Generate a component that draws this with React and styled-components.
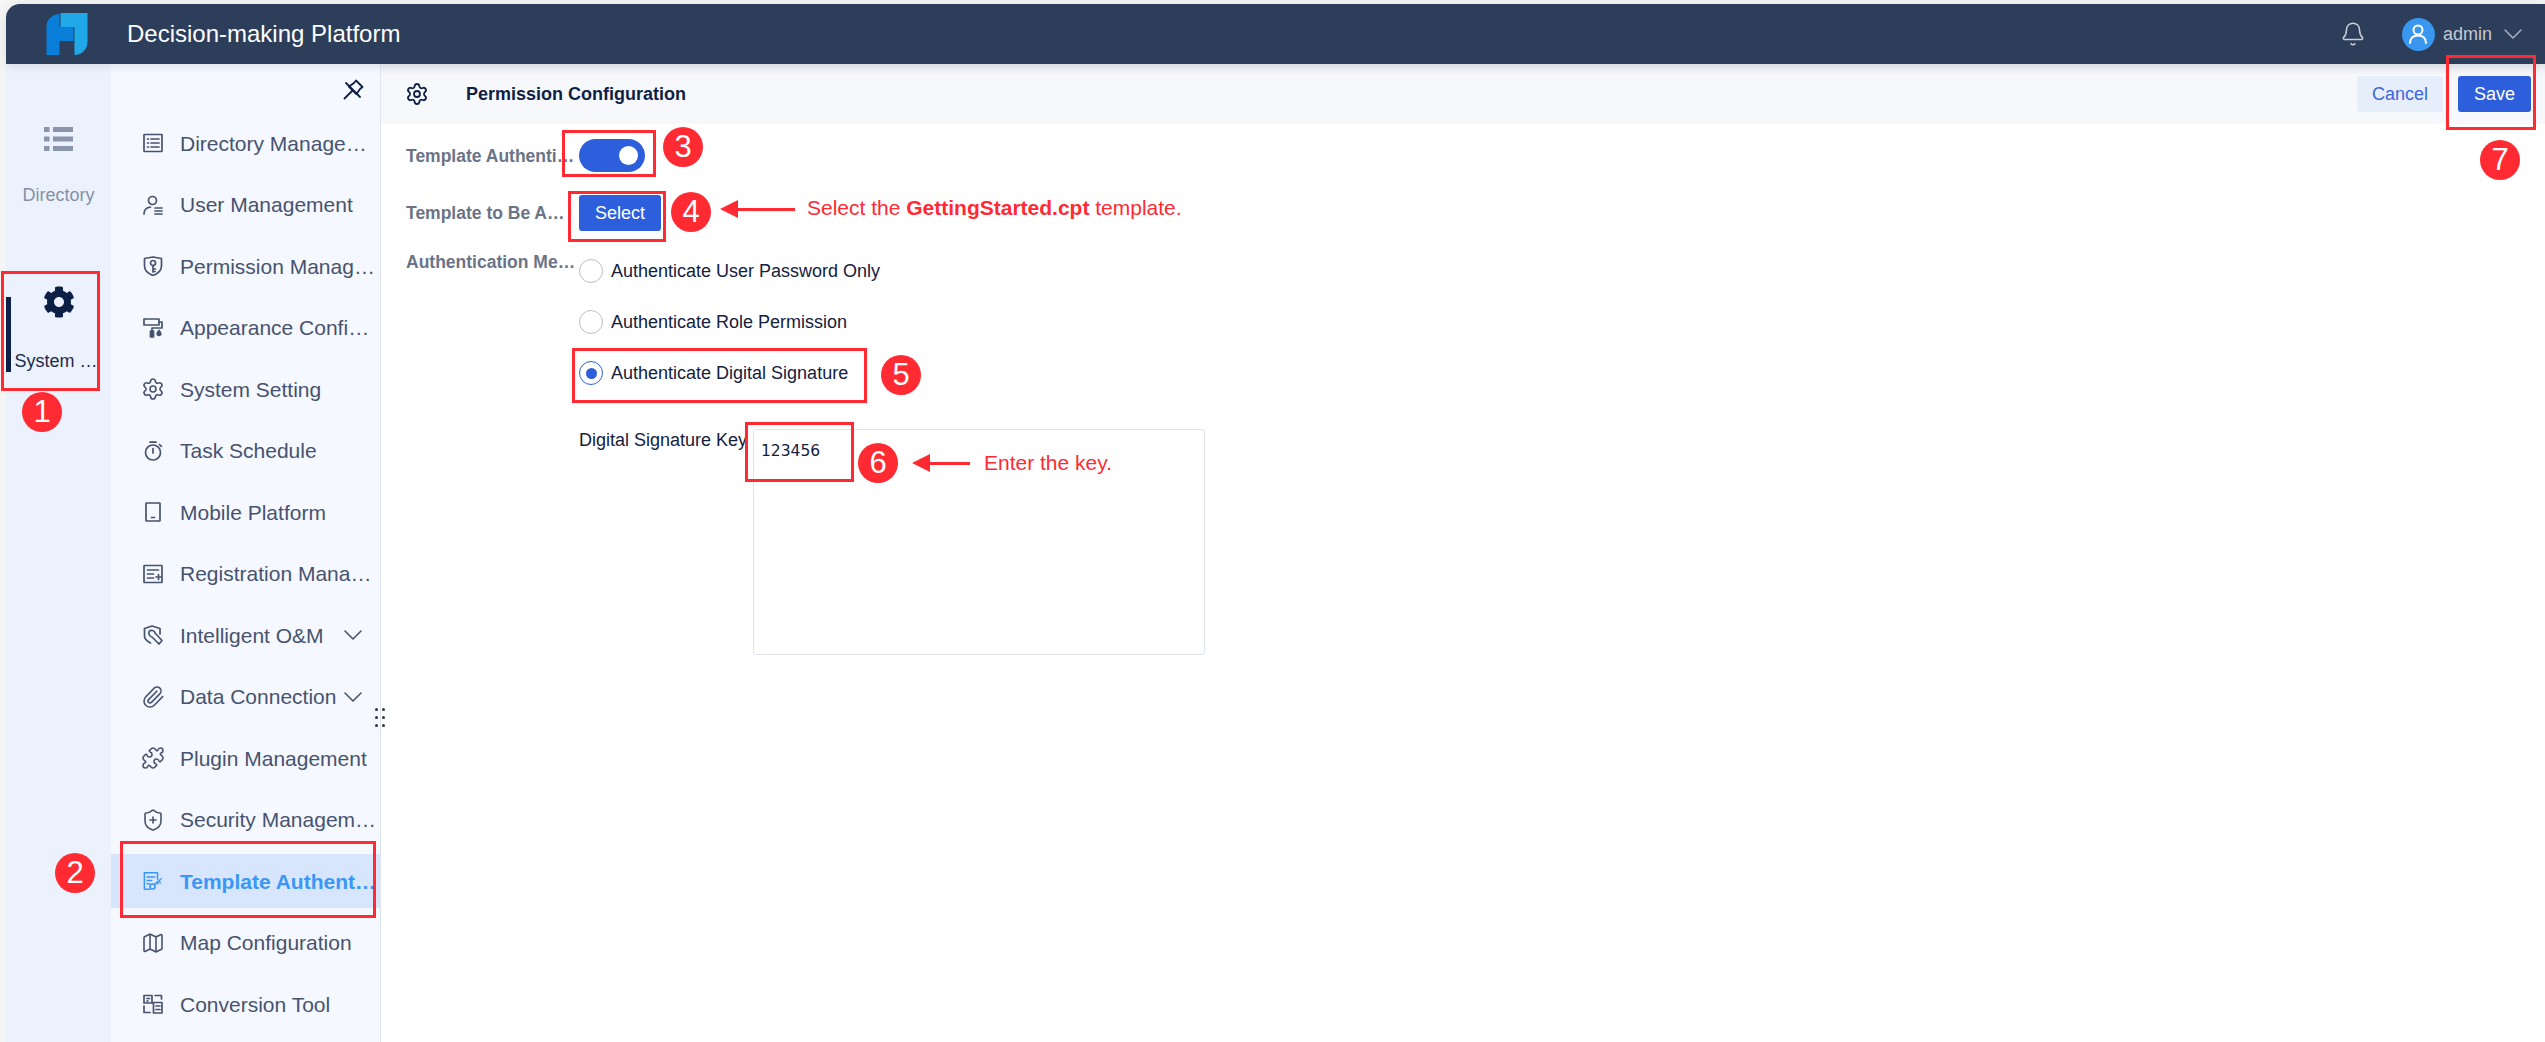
import styled, { createGlobalStyle } from 'styled-components';
import { Bell, ChevronDown, Map as MapIcon, Paperclip, Puzzle, Settings, ShieldPlus } from 'lucide-react';
import { FaCog } from 'react-icons/fa';

const GlobalStyle = createGlobalStyle`
  html, body {
    margin: 0;
    height: 100%;
    overflow: hidden;
    background: #f5f5f5;
    font-family: "Liberation Sans", Arial, sans-serif;
  }
  * { box-sizing: border-box; }
`;

const Page = styled.div`
  position: relative;
  width: 2545px;
  height: 1042px;
  padding: 4px 0 0 6px;
  display: flex;
  flex-direction: column;
  overflow: hidden;
`;
const Header = styled.header`
  position: relative;
  z-index: 2;
  flex: 0 0 60px;
  display: flex;
  align-items: center;
  padding: 0 16px 0 40px;
  background: #2c3e5a;
  border-top-left-radius: 14px;
  box-shadow: 0 2px 10px rgba(30, 40, 60, 0.12);
`;
const Logo = styled.svg`
  width: 42px;
  height: 42px;
  margin-right: 39px;
`;
const HeaderTitle = styled.div`
  flex: 1;
  font-size: 24px;
  color: #fff;
`;
const BellWrap = styled.div`
  display: flex;
  margin-right: 36px;
  color: #c9ced7;
`;
const Avatar = styled.div`
  width: 33px;
  height: 33px;
  border-radius: 50%;
  background: #3a97f0;
  display: flex;
  align-items: center;
  justify-content: center;
  margin-right: 8px;
`;
const UserName = styled.span`
  font-size: 18px;
  color: #c4cad4;
  margin-right: 5px;
`;
const Body = styled.div`
  flex: 1;
  display: flex;
  min-height: 0;
`;
const Rail = styled.nav`
  flex: 0 0 105px;
  background: #ecf2fd;
`;
const RailItem = styled.div`
  position: relative;
  height: 166px;
  padding-top: ${p => p.$top}px;
  display: flex;
  flex-direction: column;
  align-items: center;
  color: ${p => (p.$active ? '#0c1f45' : '#8a95ac')};

  ${p => p.$active && `
    &::before {
      content: '';
      position: absolute;
      left: 0;
      top: 67px;
      width: 5px;
      height: 75px;
      background: #0c1f45;
    }
  `}
`;
const RailIcon = styled.div`
  height: 33px;
  display: flex;
  align-items: center;
`;
const RailLabel = styled.div`
  margin-top: ${p => p.$gap}px;
  margin-left: ${p => (p.$active ? -5 : 0)}px;
  font-size: 18px;
  line-height: 22px;
  color: ${p => (p.$active ? '#1a2a4a' : '#8590a8')};
`;
const SubNav = styled.aside`
  position: relative;
  flex: 0 0 270px;
  min-width: 0;
  background: #f5f8ff;
  border-right: 1px solid #dfe3ee;
`;
const PinRow = styled.div`
  height: 52px;
  padding: 14px 15px 0 0;
  display: flex;
  justify-content: flex-end;
  align-items: flex-start;
`;
const MenuList = styled.ul`
  list-style: none;
  margin: 0;
  padding: 0;
  display: flex;
  flex-direction: column;
  gap: 7.5px;
`;
const MenuRow = styled.li`
  height: 54px;
  padding: 0 3px 0 32px;
  display: flex;
  align-items: center;
  gap: 17px;
  color: ${p => (p.$active ? '#3a97f5' : '#47536e')};
  background: ${p => (p.$active ? '#d7e6fc' : 'transparent')};
  font-size: 21px;
  font-weight: ${p => (p.$active ? 700 : 400)};
`;
const MenuIcon = styled.svg`
  flex: 0 0 20px;
  width: 20px;
  height: 20px;
  fill: none;
  stroke: currentColor;
  stroke-width: 1.7;
  stroke-linecap: round;
  stroke-linejoin: round;
`;
const MenuText = styled.span`
  flex: 1;
  min-width: 0;
  padding-top: 1px;
  white-space: nowrap;
  overflow: hidden;
  text-overflow: ellipsis;
`;
const MenuChevron = styled(ChevronDown)`
  position: absolute;
  left: 226px;
`;
const Handle = styled.div`
  position: absolute;
  left: 264px;
  top: 644px;
  display: grid;
  grid-template-columns: 3px 3px;
  column-gap: 4px;
  row-gap: 5px;

  & > i {
    width: 3px;
    height: 3px;
    background: #2a3347;
    border-radius: 50%;
  }
`;
const Main = styled.main`
  flex: 1;
  min-width: 0;
  display: flex;
  flex-direction: column;
  background: #fff;
`;
const TopBar = styled.div`
  flex: 0 0 60px;
  padding: 0 14px 0 24px;
  display: flex;
  align-items: center;
  background: linear-gradient(#eceef1, #f7f8fc 12px);
`;
const TopBarIcon = styled(Settings)`
  color: #0f1f44;
  margin-right: 37px;
`;
const PageTitle = styled.h1`
  flex: 1;
  margin: 0;
  font-size: 18px;
  font-weight: 700;
  color: #0f1f44;
`;
const Button = styled.button`
  height: 36px;
  width: ${p => p.$width}px;
  margin-left: ${p => p.$left || 0}px;
  border: 0;
  border-radius: 3px;
  padding: 0;
  font: 400 18px "Liberation Sans", Arial, sans-serif;
  color: ${p => (p.$ghost ? '#3e66dc' : '#fff')};
  background: ${p => (p.$ghost ? '#e6eefc' : '#2d5fdc')};
`;
const Form = styled.div`
  padding: 15px 0 0 25px;
  display: flex;
  flex-direction: column;
`;
const FormRow = styled.div`
  display: flex;
  align-items: ${p => (p.$top ? 'flex-start' : 'center')};
  margin-bottom: ${p => p.$bottom}px;
`;
const LabelSlot = styled.div`
  flex: 0 0 173px;
  min-width: 0;
`;
const FieldLabel = styled.label`
  display: block;
  max-width: ${p => p.$max || 173}px;
  font-size: 17.5px;
  line-height: ${p => (p.$tall ? '33px' : '22px')};
  font-weight: 700;
  color: #6b7387;
  white-space: nowrap;
  overflow: hidden;
  text-overflow: ellipsis;
`;
const Toggle = styled.div`
  width: 66px;
  height: 33px;
  border-radius: 17px;
  background: #2d5fdc;
  display: flex;
  align-items: center;
  justify-content: flex-end;
  padding-right: 7px;

  &::after {
    content: '';
    width: 19px;
    height: 19px;
    border-radius: 50%;
    background: #fff;
  }
`;
const RadioGroup = styled.div`
  display: flex;
  flex-direction: column;
`;
const RadioRow = styled.div`
  height: 51px;
  display: flex;
  align-items: center;
  gap: 8px;
  font-size: 18px;
  color: #14213d;
`;
const RadioDot = styled.span`
  width: 24px;
  height: 24px;
  border-radius: 50%;
  border: 1px solid ${p => (p.$checked ? '#2d5fdc' : '#b9bfcc')};
  background: #fff;
  display: flex;
  align-items: center;
  justify-content: center;

  ${p => p.$checked && `
    &::after {
      content: '';
      width: 11px;
      height: 11px;
      border-radius: 50%;
      background: #2d5fdc;
    }
  `}
`;
const KeyRow = styled.div`
  display: flex;
  align-items: flex-start;
  margin: 30.5px 0 0 173px;
`;
const KeyLabel = styled.label`
  flex: 0 0 174px;
  font-size: 18px;
  line-height: 22px;
  color: #14213d;
`;
const KeyBox = styled.div`
  width: 452px;
  height: 226px;
  padding: 10px 7px;
  border: 1px solid #dfe2ea;
  border-radius: 3px;
  font-family: "DejaVu Sans", Verdana, sans-serif;
  font-size: 15.5px;
  line-height: 22px;
  color: #14213d;
`;

const RedBox = styled.div`
  position: absolute;
  left: ${p => p.$x}px;
  top: ${p => p.$y}px;
  width: ${p => p.$w}px;
  height: ${p => p.$h}px;
  border: 3px solid #ff2a32;
  z-index: 5;
`;
const Badge = styled.div`
  position: absolute;
  left: ${p => p.$x - 20}px;
  top: ${p => p.$y - 20}px;
  width: 40px;
  height: 40px;
  border-radius: 50%;
  background: #ff2a32;
  color: #fff;
  font-size: 31px;
  line-height: 40px;
  text-align: center;
  z-index: 5;
`;
const Arrow = styled.div`
  position: absolute;
  left: ${p => p.$x}px;
  top: ${p => p.$y - 9}px;
  width: ${p => p.$w}px;
  height: 18px;
  display: flex;
  align-items: center;
  z-index: 5;

  &::before {
    content: '';
    border-style: solid;
    border-width: 9px 18px 9px 0;
    border-color: transparent #ff2a32 transparent transparent;
  }
  &::after {
    content: '';
    flex: 1;
    height: 3px;
    background: #ff2a32;
  }
`;
const Note = styled.div`
  position: absolute;
  left: ${p => p.$x}px;
  top: ${p => p.$y - 12}px;
  font-size: 21px;
  line-height: 24px;
  color: #ff2a32;
  white-space: nowrap;
  z-index: 5;
`;

const DirectoryIcon = () => (
  <MenuIcon viewBox="0 0 20 20">
    <rect x="1" y="1.500" width="18" height="17" rx="0.5" />
    <path d="M4.500 6h1M8 6h8M4.500 10h1M8 10h8M4.500 14h1M8 14h8" />
  </MenuIcon>
);
const UserIcon = () => (
  <MenuIcon viewBox="0 0 20 20">
    <circle cx="9.500" cy="5.500" r="4" />
    <path d="M1 19c0-4 2.500-6.500 6.500-7M12 13h7M12 16h7M12 19h7" />
  </MenuIcon>
);
const PermissionIcon = () => (
  <MenuIcon viewBox="0 0 20 20">
    <path d="M10 1 18.500 2.500V10c0 4.500-3.500 7.500-8.500 9.500C5 17.500 1.500 14.500 1.500 10V2.500z" />
    <circle cx="10" cy="7" r="2.500" />
    <path d="M10 9.500V16M10 13h2.500M10 15.500h2" />
  </MenuIcon>
);
const RollerIcon = () => (
  <MenuIcon viewBox="0 0 20 20">
    <rect x="1" y="1" width="15" height="6" />
    <path d="M16 4h3v6H9v3" />
    <rect x="7.500" y="13" width="3" height="6" fill="currentColor" />
    <path d="M16 12.500c1 1.200 1.800 2 1.800 3a1.800 1.800 0 0 1-3.600 0c0-1 .8-1.800 1.800-3z" fill="currentColor" />
  </MenuIcon>
);
const TimerIcon = () => (
  <MenuIcon viewBox="0 0 20 20">
    <circle cx="10" cy="11.500" r="7.500" />
    <path d="M7 1.200h6M10 7.500v4.500M16.500 3.500l1.800 1.800" />
  </MenuIcon>
);
const MobileIcon = () => (
  <MenuIcon viewBox="0 0 20 20">
    <rect x="3" y="1" width="14" height="18" rx="0.5" />
    <path d="M8.500 15.500h3" />
  </MenuIcon>
);
const RegistrationIcon = () => (
  <MenuIcon viewBox="0 0 20 20">
    <rect x="1" y="1.500" width="18" height="17" rx="0.5" />
    <path d="M4.500 6h11M4.500 10h6M4.500 14h6M13 13h5M15.500 10.500v5" />
  </MenuIcon>
);
const OpsIcon = () => (
  <MenuIcon viewBox="0 0 20 20">
    <path d="M17 9V3.500L9 1 1.500 3.500V11c0 3 3 5.500 6 7" />
    <path d="M6.500 6c2-1.500 5-.5 5.500 2l7 7.500-3 3.500-7-7c-2.500-.5-4-3.500-2.500-6z" />
  </MenuIcon>
);
const TemplateIcon = () => (
  <MenuIcon viewBox="0 0 22 20">
    <path d="M8 19H1.500V1H16v7" />
    <path d="M4.500 5.500h8.500M4.500 9.500h5M4.500 13h2.500" />
    <circle cx="10.500" cy="16" r="2.800" />
    <path d="m12.500 14 7.500-6.500M17 10l2 2M15 11.500l1.500 1.500" />
  </MenuIcon>
);
const ConvertIcon = () => (
  <MenuIcon viewBox="0 0 20 20">
    <path d="M1 9V1.500h8V9zM4 4.500h2.500M4 7h1M12 1.500h6.500V5M1 12v6.500h6M10.500 8.500h8.500v10.500H10.500zM13 12h4M13 15.500h4" />
  </MenuIcon>
);
const PackedIcon = styled.span`
  flex: 0 0 20px;
  display: flex;
  justify-content: center;
  width: 20px;
`;
const packed = Comp => <PackedIcon><Comp size={24} strokeWidth={1.6} style={{ flex: '0 0 24px' }} /></PackedIcon>;

const MENU = [
  { label: 'Directory Management', icon: <DirectoryIcon /> },
  { label: 'User Management', icon: <UserIcon /> },
  { label: 'Permission Management', icon: <PermissionIcon /> },
  { label: 'Appearance Configuration', icon: <RollerIcon /> },
  { label: 'System Setting', icon: packed(Settings) },
  { label: 'Task Schedule', icon: <TimerIcon /> },
  { label: 'Mobile Platform', icon: <MobileIcon /> },
  { label: 'Registration Management', icon: <RegistrationIcon /> },
  { label: 'Intelligent O&M', icon: <OpsIcon />, more: true },
  { label: 'Data Connection', icon: packed(Paperclip), more: true },
  { label: 'Plugin Management', icon: packed(Puzzle) },
  { label: 'Security Management', icon: packed(ShieldPlus) },
  { label: 'Template Authentication', icon: <TemplateIcon />, active: true },
  { label: 'Map Configuration', icon: packed(MapIcon) },
  { label: 'Conversion Tool', icon: <ConvertIcon /> },
];

const BOXES = [
  [1, 271, 99, 120],
  [120, 841, 256, 77],
  [562, 130, 94, 47],
  [568, 191, 98, 51],
  [572, 348, 295, 55],
  [745, 422, 109, 60],
  [2446, 55, 90, 75],
];
const BADGES = [
  [42, 412],
  [75, 873],
  [683, 147],
  [691, 212],
  [901, 375],
  [878, 463],
  [2500, 160],
];

export default function App() {
  return (
    <Page>
      <GlobalStyle />
      <Header>
        <Logo viewBox="0 0 41 42">
          <path fill="#0a7fd9" d="M0 14a13 13 0 0 1 13-13v13h14v14H13v14H0z" />
          <path fill="#1fa9e8" d="M14 0h27v29a13 13 0 0 1-13 13V14H14z" />
        </Logo>
        <HeaderTitle>Decision-making Platform</HeaderTitle>
        <BellWrap>
          <Bell size={26} strokeWidth={1.4} />
        </BellWrap>
        <Avatar>
          <svg width="24" height="24" viewBox="0 0 24 24" fill="none" stroke="#fff" strokeWidth="2" strokeLinecap="round">
            <circle cx="12" cy="8" r="4.500" />
            <path d="M4 21c0-5 3.500-7.500 8-7.500s8 2.500 8 7.500" />
          </svg>
        </Avatar>
        <UserName>admin</UserName>
        <ChevronDown size={32} color="#aab2bf" strokeWidth={1.1} />
      </Header>
      <Body>
        <Rail>
          <RailItem $top={58}>
            <RailIcon>
              <svg width="29" height="26" viewBox="0 0 29 26" fill="currentColor">
                <rect x="0" y="1" width="5.500" height="5" />
                <rect x="9" y="1" width="20" height="5" />
                <rect x="0" y="10.500" width="5.500" height="5" />
                <rect x="9" y="10.500" width="20" height="5" />
                <rect x="0" y="20" width="5.500" height="5" />
                <rect x="9" y="20" width="20" height="5" />
              </svg>
            </RailIcon>
            <RailLabel $gap={29}>Directory</RailLabel>
          </RailItem>
          <RailItem $active $top={55}>
            <RailIcon><FaCog size={32} /></RailIcon>
            <RailLabel $active $gap={32}>System …</RailLabel>
          </RailItem>
        </Rail>
        <SubNav>
          <PinRow>
            <svg width="24" height="24" viewBox="0 0 24 24" fill="none" stroke="#0f1f44" strokeWidth="1.800" strokeLinecap="round" strokeLinejoin="round">
              <path d="M15 2.500 21.500 9 19 11l-3.500 5-7.500-7.500 5-3.500z" />
              <path d="M8 8.500l7.500 7.500M11.500 12.500 3.500 20.500M5 5l14 14" />
            </svg>
          </PinRow>
          <MenuList>
            {MENU.map(item => (
              <MenuRow key={item.label} $active={item.active}>
                {item.icon}
                <MenuText>{item.label}</MenuText>
                {item.more && <MenuChevron size={32} strokeWidth={1.2} />}
              </MenuRow>
            ))}
          </MenuList>
          <Handle>
            {[0, 1, 2, 3, 4, 5].map(i => <i key={i} />)}
          </Handle>
        </SubNav>
        <Main>
          <TopBar>
            <TopBarIcon size={24} strokeWidth={1.8} />
            <PageTitle>Permission Configuration</PageTitle>
            <Button $ghost $width={86}>Cancel</Button>
            <Button $width={73} $left={15}>Save</Button>
          </TopBar>
          <Form>
            <FormRow $bottom={23}>
              <LabelSlot><FieldLabel>Template Authentication</FieldLabel></LabelSlot>
              <Toggle />
            </FormRow>
            <FormRow $bottom={14.5}>
              <LabelSlot><FieldLabel $max={163}>Template to Be Authenticated</FieldLabel></LabelSlot>
              <Button $width={82}>Select</Button>
            </FormRow>
            <FormRow $top $bottom={0}>
              <LabelSlot><FieldLabel $tall>Authentication Method</FieldLabel></LabelSlot>
              <RadioGroup>
                <RadioRow><RadioDot />Authenticate User Password Only</RadioRow>
                <RadioRow><RadioDot />Authenticate Role Permission</RadioRow>
                <RadioRow><RadioDot $checked />Authenticate Digital Signature</RadioRow>
              </RadioGroup>
            </FormRow>
            <KeyRow>
              <KeyLabel>Digital Signature Key</KeyLabel>
              <KeyBox>123456</KeyBox>
            </KeyRow>
          </Form>
        </Main>
      </Body>
      {BOXES.map(([x, y, w, h]) => <RedBox key={`${x}-${y}`} $x={x} $y={y} $w={w} $h={h} />)}
      {BADGES.map(([x, y], i) => <Badge key={i} $x={x} $y={y}>{i + 1}</Badge>)}
      <Arrow $x={720} $y={209} $w={75} />
      <Note $x={807} $y={208}>Select the <b>GettingStarted.cpt</b> template.</Note>
      <Arrow $x={912} $y={463} $w={58} />
      <Note $x={984} $y={463}>Enter the key.</Note>
    </Page>
  );
}
